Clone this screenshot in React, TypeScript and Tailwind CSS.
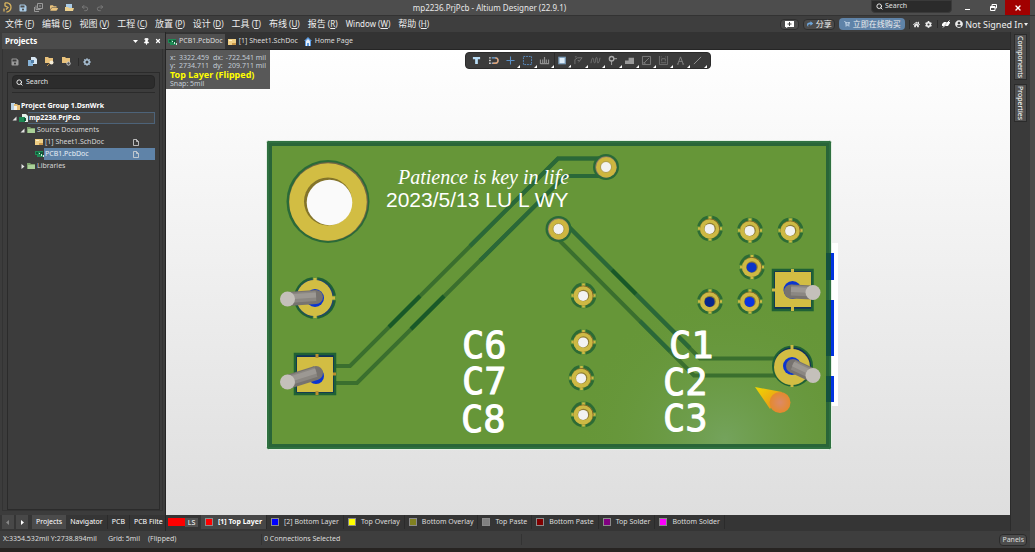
import React from 'react';
import { Undo2, Redo2, Search, Pin, X } from 'lucide-react';
import { FaHome, FaCog, FaUserCircle, FaSave, FaFolderOpen, FaShare, FaCartPlus } from 'react-icons/fa';

const menus = [
  ['文件', 'F'], ['编辑', 'E'], ['视图', 'V'], ['工程', 'C'], ['放置', 'P'], ['设计', 'D'],
  ['工具', 'T'], ['布线', 'U'], ['报告', 'R'], ['Window', 'W'], ['帮助', 'H'],
];

const layers = [
  { name: '[1] Top Layer', color: 'bg-[#ff0000]', active: true },
  { name: '[2] Bottom Layer', color: 'bg-[#0000ff]' },
  { name: 'Top Overlay', color: 'bg-[#ffff00]' },
  { name: 'Bottom Overlay', color: 'bg-[#808020]' },
  { name: 'Top Paste', color: 'bg-[#808080]' },
  { name: 'Bottom Paste', color: 'bg-[#800000]' },
  { name: 'Top Solder', color: 'bg-[#800080]' },
  { name: 'Bottom Solder', color: 'bg-[#ff00ff]' },
];

const PcbIcon = () => (
  <svg width="9" height="8" viewBox="0 0 9 8" className="shrink-0">
    <path d="M0 1h8v6H2V5H0z" fill="#1f8a55" />
    <path d="M1 2h2v2H1zM5 2h3v3H5z" fill="#0f5a38" />
    <path d="M4 3h1v1H4zM6 4h1v2H6zM8 5h1v2H8z" fill="#cfe8dc" />
  </svg>
);

const SchIcon = () => (
  <svg width="8" height="8" viewBox="0 0 8 8" className="shrink-0">
    <path d="M0 1h8v6H0z" fill="#f0cf85" />
    <path d="M4 5h4v2H4z" fill="#c9974a" />
    <path d="M1 2h3v1H1z" fill="#fff1c8" />
  </svg>
);

const FolderIcon = () => (
  <svg width="8" height="8" viewBox="0 0 8 8" className="shrink-0">
    <path d="M0 1h3l1 1h4v5H0z" fill="#7fa36f" />
    <path d="M1 3h7v4H1z" fill="#a9cf98" />
  </svg>
);

const GroupIcon = () => (
  <svg width="9" height="9" viewBox="0 0 9 9" className="shrink-0">
    <path d="M0 1h4v7H0z" fill="#b9d3e6" />
    <path d="M3 2h3l1 1h2v5H3z" fill="#e8c27a" />
    <path d="M3 4h3v4H3z" fill="#f7f1e3" />
  </svg>
);

const ProjectIcon = () => (
  <svg width="9" height="9" viewBox="0 0 9 9" className="shrink-0">
    <path d="M3 0h4l2 2v6H3z" fill="#e6efe9" />
    <path d="M0 3h6v5H0z" fill="#1f8a55" />
    <path d="M5 4h2v3H5z" fill="#0f5a38" />
  </svg>
);

const PageIcon = () => (
  <svg width="6" height="7" viewBox="0 0 6 7" className="shrink-0">
    <path d="M.5.5h3l2 2v4h-5zM3.500 .5v2h2" fill="none" stroke="#d8d8d8" strokeWidth=".8" />
  </svg>
);

const Arrow = ({ open }: { open?: boolean }) => (
  <svg width="5" height="5" viewBox="0 0 5 5" className="shrink-0">
    <path d={open ? 'M4.500 .5v4h-4z' : 'M1.500 0l3 2.500-3 2.500z'} fill="#e4e4e4" />
  </svg>
);

function TitleBar() {
  return (
    <header className="grid grid-cols-[1fr_auto_1fr] h-4 bg-[#4d4d4d] border-b border-[#333]">
      <div className="flex items-center gap-[7px] pl-[3px]">
        <svg width="9" height="11" viewBox="0 0 9 11" fill="none" stroke="#d9b45f" strokeWidth="1.300">
          <path d="M2 .8h2.500C7 1.500 8 3.200 8 5.300S6.500 9.500 3.500 10.200M2 .8v3L5 5.500 3 7.500M1 6.500v3" />
        </svg>
        <button aria-label="Save"><FaSave size={8} className="text-[#a9cbe6]" /></button>
        <button aria-label="Save all">
          <svg width="9" height="9" viewBox="0 0 9 9" fill="none" stroke="#9a9a9a">
            <path d="M3.500.5h5v5h-5zM2 2.500v4h4.500M.5 4v4.500H5M5 3h2" />
          </svg>
        </button>
        <button aria-label="Open"><FaFolderOpen size={8} className="text-[#e9c27c]" /></button>
        <button aria-label="Open project">
          <svg width="9" height="9" viewBox="0 0 9 9">
            <path d="M1 1h6v5H1z" fill="#a9cbe6" />
            <path d="M0 4h3l1 1h5L8 8H0z" fill="#ecd08f" />
          </svg>
        </button>
        <button aria-label="Undo"><Undo2 size={8} className="text-[#8a8a8a]" /></button>
        <button aria-label="Redo"><Redo2 size={8} className="text-[#8a8a8a]" /></button>
      </div>
      <h1 className="pr-14 text-[8px] leading-[15px] text-[#e8e8e8]">mp2236.PrjPcb - Altium Designer (22.9.1)</h1>
      <div className="flex justify-end">
        <label className="flex items-center gap-[2px] w-[81px] h-[13px] px-1 mr-[9px] bg-[#2b2b2b] border border-[#3a3a3a] rounded-b-sm">
          <Search size={7} strokeWidth={3} className="shrink-0" />
          <input aria-label="Search" placeholder="Search" className="min-w-0 flex-1 text-[7px] bg-transparent outline-none placeholder:text-[#e0e0e0]" />
        </label>
        <button aria-label="Minimize" className="flex justify-center items-end w-3 mr-2 pb-[5px]">
          <span className="w-[5px] h-px bg-white" />
        </button>
        <button aria-label="Restore" className="flex justify-center items-center w-6">
          <svg width="7" height="7" viewBox="0 0 7 7" fill="none" stroke="#fff"><path d="M2 2V.5h4.500V4H5M.5 2.500H5v4H.5zM.5 3.500H5" /></svg>
        </button>
        <button aria-label="Close" className="flex justify-center items-center w-[25px] bg-[#a10000] mr-[5px]">
          <X size={8} strokeWidth={4} />
        </button>
      </div>
    </header>
  );
}

function MenuBar() {
  return (
    <nav className="flex items-center justify-between h-4 bg-[#3e3e3e] text-[#eee]">
      <div className="flex gap-[8px] pl-[5px] text-[8px] leading-4">
        {menus.map(([label, key]) => (
          <button key={key} className="whitespace-nowrap">
            <span className={key === 'W' ? '' : 'text-[9px]'}>{label}</span> (<u>{key}</u>)
          </button>
        ))}
      </div>
      <div className="flex items-center pr-[2px] text-[8px] leading-none">
        <button aria-label="Comment" className="flex justify-center items-center w-[19px] h-[11px] mr-1 bg-[#4b4b4b] border border-[#2e2e2e] rounded-sm">
          <svg width="9" height="7" viewBox="0 0 9 7"><path d="M0 0h9v6H3L1 7V6H0z" fill="#fff" /><path d="M4.500 1v4M2.500 3h4" stroke="#444" /></svg>
        </button>
        <button className="flex justify-center items-center gap-[3px] w-[32px] h-[11px] mr-1 bg-[#4b4b4b] border border-[#2e2e2e] rounded-sm">
          <FaShare size={6} className="text-[#6ea6dc]" />分享
        </button>
        <button className="flex justify-center items-center gap-[3px] w-[66px] h-3 mr-1 bg-[#5f83a8] rounded-sm">
          <FaCartPlus size={6} className="text-[#b6cbe0]" />立即在线购买
        </button>
        <div className="flex items-center gap-[5px] pl-[3px] border-l border-[#2b2b2b]">
          <button aria-label="Home"><FaHome size={7} /></button>
          <button aria-label="Preferences"><FaCog size={7} /></button>
          <button aria-label="Extensions" className="pl-1 border-l border-[#2b2b2b]">
            <svg width="8" height="8" viewBox="0 0 8 8"><path d="M0 4l2-2h3L2 6H0zM8 3L6 6H3l3-4h2z" fill="#fff" /><path d="M1 7.500L7.500.5" stroke="#fff" /></svg>
          </button>
          <button className="flex items-center gap-[2px] text-[9px] whitespace-nowrap">
            <FaUserCircle size={8} />Not Signed In
            <svg width="4" height="3" viewBox="0 0 4 3" className="-ml-px"><path d="M0 0h4L2 3z" fill="#eee" /></svg>
          </button>
        </div>
      </div>
    </nav>
  );
}

function ProjectsPanel() {
  return (
    <aside className="flex flex-col w-[166px] shrink-0 bg-[#3c3c3c] border-r border-[#252525]">
      <div className="flex items-center gap-[5px] h-4 mt-px ml-[2px] pl-[3px] pr-1 bg-[#4b4b4b]">
        <h2 className="flex-1 text-[8px] font-bold text-white">Projects</h2>
        <button aria-label="Panel menu"><svg width="5" height="3" viewBox="0 0 5 3"><path d="M0 0h5L2.500 3z" fill="#fff" /></svg></button>
        <button aria-label="Pin"><Pin size={7} strokeWidth={3} fill="#fff" /></button>
        <button aria-label="Close panel"><X size={6} strokeWidth={5} /></button>
      </div>
      <div className="flex flex-col flex-1 ml-[2px] mr-[2px] mb-1 pl-1 pr-[2px] border border-t-0 border-[#333]">
        <div className="flex items-center gap-2 h-[23px] pt-[2px] pl-1">
          <button aria-label="Save"><FaSave size={8} className="text-[#9a9a9a]" /></button>
          <button aria-label="Compile" className="pl-px">
            <svg width="9" height="9" viewBox="0 0 9 9"><path d="M3 0h4l2 2v5H3z" fill="#d7e6f2" /><path d="M0 3h5v6H0z" fill="#86b3d9" /><path d="M3 3h3v3H3z" fill="#527fa8" /></svg>
          </button>
          <button aria-label="Open folder">
            <svg width="9" height="9" viewBox="0 0 9 9"><path d="M0 0h3l1 1h4v5H0z" fill="#e9c27c" /><circle cx="6.500" cy="5.500" r="2" fill="#f4ecd8" /><path d="M2 9l3-3" stroke="#b78d4a" /></svg>
          </button>
          <button aria-label="Folder options">
            <svg width="9" height="9" viewBox="0 0 9 9"><path d="M0 0h3l1 1h4v5H0z" fill="#e9c27c" /><circle cx="6.500" cy="6.500" r="1.700" fill="#555" stroke="#ccc" /></svg>
          </button>
          <button aria-label="Settings" className="-ml-px pl-1 border-l border-[#2b2b2b]">
            <svg width="8" height="8" viewBox="0 0 8 8" fill="none" stroke="#a8bfd3"><circle cx="4" cy="4" r="2.300" strokeWidth="1.600" /><path d="M4 0v8M0 4h8M1.200 1.200l5.600 5.600M6.800 1.200L1.200 6.800" strokeDasharray="1 6" /></svg>
          </button>
        </div>
        <div className="flex-1 border border-[#2b2b2b] pl-1 pr-1 pt-[2px]">
          <label className="flex items-center gap-[3px] h-[14px] px-[3px] bg-[#2c2c2c] border border-[#262626] rounded-sm">
            <Search size={7} strokeWidth={3} className="shrink-0" />
            <input aria-label="Search projects" placeholder="Search" className="min-w-0 flex-1 text-[7px] bg-transparent outline-none placeholder:text-[#e0e0e0]" />
          </label>
          <div className="mt-[3px] mb-[7px] h-px bg-[#2b2b2b]" />
          <ul className="-ml-px text-[7px] leading-3 text-[#d6d6d6]">
            <li className="flex items-center gap-px h-3 font-bold text-white"><GroupIcon />Project Group 1.DsnWrk</li>
            <li className="flex items-center h-3 pl-px font-bold text-white">
              <Arrow open /><span className="w-[2px]" /><ProjectIcon />
              <span className="flex-1 h-3 pl-px leading-[10px] border border-l-0 border-[#4d6379] bg-[#454545]">mp2236.PrjPcb</span>
            </li>
            <li className="flex items-center gap-[2px] h-3 pl-[9px]"><Arrow open /><FolderIcon />Source Documents</li>
            <li className="flex items-center gap-[2px] h-3 pl-[24px] pr-4"><SchIcon /><span className="flex-1">[1] Sheet1.SchDoc</span><PageIcon /></li>
            <li className="flex items-center h-3 pl-[24px] text-[#e8eef4]">
              <PcbIcon />
              <span className="flex items-center justify-between flex-1 h-3 pl-px pr-4 bg-[#5f83a8]">PCB1.PcbDoc<PageIcon /></span>
            </li>
            <li className="flex items-center gap-[2px] h-3 pl-[9px]"><Arrow /><FolderIcon />Libraries</li>
          </ul>
        </div>
      </div>
      <div className="flex h-4 pl-[2px] text-[7px] leading-[14px] bg-[#353535] overflow-hidden">
        <button aria-label="Previous" className="flex justify-center items-center w-3 h-[14px] mr-[2px] bg-[#484848]"><svg width="4" height="5" viewBox="0 0 4 5"><path d="M3 0v5L0 2.500z" fill="#888" /></svg></button>
        <button aria-label="Next" className="flex justify-center items-center w-3 h-[14px] mr-1 bg-[#484848]"><svg width="4" height="5" viewBox="0 0 4 5"><path d="M1 0v5l3-2.500z" fill="#fff" /></svg></button>
        <button className="h-[14px] px-1 bg-[#4b4b4b] text-white">Projects</button>
        <button className="h-[14px] px-1 border-r border-[#2b2b2b]">Navigator</button>
        <button className="h-[14px] px-1 border-r border-[#2b2b2b]">PCB</button>
        <button className="h-[14px] pl-1 whitespace-nowrap">PCB Filte</button>
      </div>
    </aside>
  );
}

const toolIcons = [
  <path d="M2 2h8v2.500H7.500V10h-3V4.500H2z" fill="#b8dcf5" />,
  <g fill="none" strokeWidth="1.500"><path d="M4 3h4a2.500 2.500 0 0 1 0 6H4" stroke="#6ea6dc" /><path d="M8 3a3 3 0 0 1 0 6H5" stroke="#e0a070" /><path d="M1 3h2M1 6h2M1 9h2" stroke="#ccc" /></g>,
  <path d="M6 1.500v9M1.500 6h9" stroke="#5b91c8" strokeWidth="1.200" />,
  <path d="M1.500 1.500h9v9h-9z" fill="none" stroke="#5b91c8" strokeDasharray="2 1" />,
  <path d="M1.500 9.500h9V5M1.500 10V5M4 9V5M6 9V2M8 9V5" fill="none" stroke="#909090" strokeWidth="1.300" />,
  <g><path d="M1.500 1.500h9v9h-9z" fill="#7ea0be" /><path d="M3 3h6v6H3z" fill="#dcebf7" /></g>,
  <path d="M2 10V5l3-2h5M2 2h2M6 8l4-5M5 6h2" stroke="#777" fill="none" />,
  <path d="M1 9c1-8 3-6 3-3s2 4 2 0 2-5 2 0 2 3 3-3" stroke="#777" fill="none" />,
  <g fill="none" stroke="#aaa"><circle cx="5" cy="4" r="2.500" strokeWidth="1.500" /><path d="M5 6v5M7 4h4" /></g>,
  <path d="M1 10V6h4V3h6v7z" fill="#9a9a9a" />,
  <path d="M1.500 1.500h9v9h-9zM3 9l6-6M3 8v1h2" fill="none" stroke="#808080" />,
  <path d="M1.500 1v9.500h9V1M3 8.500h6M4 7V4h4v3M3 2h1M8 2h1" fill="none" stroke="#707070" />,
  <path d="M2 10h2M8 10h2M3 10l3-8 3 8M4 7h4" fill="none" stroke="#858585" />,
  <path d="M2 10l8-8" stroke="#999" />,
];

function Toolbar() {
  return (
    <div className="absolute top-[2px] left-[299px] flex h-[17px] px-[3px] bg-[#3b3b3b] border border-[#2b2b2b] rounded-sm">
      {toolIcons.map((icon, i) => (
        <button key={i} aria-label={`Tool ${i + 1}`} className={`flex justify-center items-center w-[17px] ${i === 5 ? 'border-l border-[#2b2b2b]' : ''}`}>
          <svg width="17" height="15" viewBox="-2.500 -1.500 17 15">
            <g transform="translate(-.4 .6) scale(.9)">{icon}</g>
            {i > 1 && <path d="M14.500 10.500v3h-3z" fill="#fff" />}
          </svg>
        </button>
      ))}
    </div>
  );
}

// Small through-hole pad with thermal relief spokes
function Pad({ x, y, hole = '#f2f2f2' }: { x: number; y: number; hole?: string }) {
  return (
    <g transform={`translate(${x} ${y})`}>
      <circle r="11.500" fill="none" stroke="#2d6b35" strokeWidth="2.800" />
      <path d="M-13 0H13M0 -13V13" stroke="#669638" strokeWidth="4.500" />
      <path d="M-12 0H12M0 -12V12" stroke="#cdb944" strokeWidth="2.600" />
      <circle r="10" fill="#7a5f26" />
      <circle r="9.600" cx="-.4" cy=".4" fill="#cdb944" />
      <circle r="5.800" fill="#8e7c34" />
      <circle r="5" cx="-.4" cy=".4" fill={hole} />
    </g>
  );
}

function Via({ x, y }: { x: number; y: number }) {
  return (
    <g transform={`translate(${x} ${y})`}>
      <circle r="13" fill="#2a6a38" />
      <circle r="10.700" fill="#8d7968" />
      <circle r="10.200" cx=".3" cy=".3" fill="#cdb63f" />
      <circle r="5.500" fill="#f2f2f2" stroke="#a3913a" strokeWidth=".8" />
    </g>
  );
}

function PinShaft({ x1, y1, x2, y2 }: { x1: number; y1: number; x2: number; y2: number }) {
  return (
    <g>
      <line x1={x1} y1={y1} x2={x2} y2={y2} stroke="#77736f" strokeWidth="14" />
      <circle cx={x1} cy={y1} r="7" fill="#77736f" />
      <line x1={x1} y1={y1 - 1} x2={x2} y2={y2 - 1} stroke="#8b8782" strokeWidth="10" />
      <line x1={x1} y1={y1 - 2} x2={x2} y2={y2 - 2} stroke="#9c9893" strokeWidth="5" />
      <circle cx={x2} cy={y2} r="7.500" fill="#c4c0ba" />
    </g>
  );
}

function Board() {
  return (
    <svg viewBox="166 50 844 465" className="absolute inset-0 w-full h-full">
      <defs>
        <radialGradient id="shine" gradientUnits="userSpaceOnUse" cx="725" cy="440" r="150">
          <stop offset="0" stopColor="#74a35c" />
          <stop offset="1" stopColor="#669638" stopOpacity="0" />
        </radialGradient>
        <linearGradient id="cone" x1="0" y1="0" x2="1" y2="1">
          <stop offset="0" stopColor="#f0d800" />
          <stop offset="1" stopColor="#e88a20" />
        </linearGradient>
        <radialGradient id="ball">
          <stop offset="0" stopColor="#dc8a68" />
          <stop offset="1" stopColor="#e58a2c" />
        </radialGradient>
      </defs>

      {/* Connector behind the right edge */}
      <rect x="828" y="243" width="10" height="163" fill="#fff" />

      {/* Substrate */}
      <rect x="266.500" y="140.500" width="565" height="309" rx="2" fill="#2a6a38" stroke="#e5efe5" />
      <rect x="267" y="141" width="564" height="308" rx="2" fill="#2f7040" />
      <rect x="269" y="143" width="560" height="304" fill="#296538" />
      <rect x="272" y="146" width="554" height="298" fill="#669638" />
      <rect x="272" y="146" width="554" height="298" fill="url(#shine)" />
      <path d="M826 253h5v27h-5zM826 300h5v56h-5zM826 376h5v26h-5z" fill="#14513f" />
      <path d="M831 253h3v27h-3zM831 300h3v56h-3zM831 376h3v26h-3z" fill="#0033e0" />

      {/* Traces */}
      <g fill="none" stroke="#3a6f2e" strokeWidth="4">
        <path d="M335 366H350L558 158.500H600" />
        <path d="M335 383H357L565 176H600" />
        <path d="M568 226L700 358.500H780" />
        <path d="M559 240L694 375.500H780" />
      </g>
      <g fill="none" stroke="#2a6838" strokeWidth="4">
        <path d="M470 246L558 158.500H600M480 260.500L565 176H600" />
        <path d="M568 226L612 270M636 294L690 348M640 321L670 351" />
      </g>
      <path d="M389 327L420 296M411 329L444 296M612 270L636 294" stroke="#185928" strokeWidth="4" />

      {/* Mounting hole */}
      <circle cx="328" cy="201.500" r="41.500" fill="#2a6a38" />
      <circle cx="328.500" cy="201.500" r="39.500" fill="#716545" />
      <circle cx="328" cy="202" r="38.800" fill="#d2bd43" />
      <circle cx="328" cy="201.500" r="24" fill="#83742a" />
      <circle cx="329.500" cy="202.500" r="22.800" fill="#fafafa" />

      <Via x={606} y={167} />
      <Via x={558.5} y={229} />
      <Pad x={583.5} y={295.5} />
      <Pad x={583.5} y={342} />
      <Pad x={581.5} y={378} />
      <Pad x={583.5} y={414.5} />
      <Pad x={710} y={228.5} />
      <Pad x={750} y={230.5} />
      <Pad x={790.5} y={230.5} />
      <Pad x={752} y={267} hole="#0b35c8" />
      <Pad x={710} y={301.5} hole="#08268c" />
      <Pad x={750} y={301.5} hole="#0b35e0" />

      {/* Power terminals */}
      <circle cx="315" cy="298" r="20" fill="#20456a" stroke="#1f6135" strokeWidth="2" />
      <path d="M315 298h21M315 277v42" stroke="#669638" strokeWidth="4.500" />
      <path d="M315 298h20M315 278v40" stroke="#cdb944" strokeWidth="3" />
      <circle cx="314.500" cy="298" r="18" fill="#d2bd43" />
      <circle cx="315" cy="298" r="9" fill="#0b35d0" />
      <PinShaft x1={316} y1={297} x2={287.5} y2={299} />

      <path d="M295 354h40v40h-40z" fill="#10305a" stroke="#1f6135" strokeWidth="2.500" />
      <path d="M297 357h36v35h-36z" fill="#d2bd43" />
      <path d="M317 354v4M317 391v4M333 374h3" stroke="#b98f30" strokeWidth="3" />
      <circle cx="316" cy="376" r="8" fill="#0b35d0" />
      <PinShaft x1={316} y1={373} x2={287.5} y2={382} />

      <path d="M773 270h39.500v40H773z" fill="#10305a" stroke="#1f6135" strokeWidth="2.500" />
      <path d="M775 272h36v35h-36z" fill="#d2bd43" />
      <path d="M792.500 269v4M792.500 307v4M772 290h3" stroke="#cdb944" strokeWidth="3" />
      <circle cx="792.500" cy="290" r="9" fill="#0b35d0" />
      <PinShaft x1={791} y1={291.5} x2={813} y2={292.5} />

      <circle cx="792.500" cy="366" r="19.500" fill="#10305a" stroke="#1f6135" strokeWidth="2" />
      <path d="M792 345v42" stroke="#cdb944" strokeWidth="3" />
      <circle cx="792" cy="367" r="18" fill="#d2bd43" />
      <circle cx="792" cy="366" r="9" fill="#0b35d0" />
      <PinShaft x1={793} y1={366} x2={813} y2={375.5} />

      {/* View direction marker */}
      <path d="M755 387l27 5-12 17z" fill="url(#cone)" />
      <circle cx="780" cy="402.500" r="10.500" fill="url(#ball)" />

      {/* Silkscreen */}
      <g fill="#fff">
        <text x="398" y="184" fontSize="20" fontStyle="italic" fontFamily="'Liberation Serif', serif">Patience is key in life</text>
        <text x="386" y="207" fontSize="21" fontFamily="'Liberation Sans', sans-serif">2023/5/13 LU L WY</text>
        <g fontSize="37" fontFamily="'DejaVu Sans Mono', monospace" stroke="#fff" strokeLinejoin="round">
          <text x="462" y="358">C6</text>
          <text x="462" y="394">C7</text>
          <text x="461" y="432">C8</text>
          <text x="669" y="358">C1</text>
          <text x="663" y="395">C2</text>
          <text x="663" y="431">C3</text>
        </g>
      </g>
    </svg>
  );
}

function Hud() {
  return (
    <div className="absolute top-0 left-0 w-[104px] h-[39px] px-1 pt-1 bg-[#585858] text-[7px] leading-[8px] text-[#c3ccd6]">
      <div className="grid grid-cols-[9px_34px_auto_1fr_12px] whitespace-nowrap">
        <span>x:</span><span>3322.459</span><span>dx:</span><span className="text-right">-722.541</span><span className="text-right">mil</span>
        <span>y:</span><span>2734.711</span><span>dy:</span><span className="text-right">209.711</span><span className="text-right">mil</span>
      </div>
      <p className="text-[9px] leading-[10px] font-bold text-[#ffff00] whitespace-nowrap">Top Layer (Flipped)</p>
      <p className="leading-[7px]">Snap: 5mil</p>
    </div>
  );
}

function Workspace() {
  return (
    <main className="flex flex-col flex-1 min-w-0">
      <div className="flex h-[18px] pt-[2px] bg-[#333] border-b border-[#252525] text-[7px] text-[#ddd] whitespace-nowrap">
        <button className="flex items-center gap-[2px] px-[2px] bg-[#505050]"><PcbIcon />PCB1.PcbDoc</button>
        <button className="flex items-center gap-[3px] px-[3px]"><SchIcon />[1] Sheet1.SchDoc</button>
        <button className="flex items-center gap-[3px] px-[3px]">
          <svg width="8" height="9" viewBox="0 0 8 9"><path d="M4 0l4 4H7v5H1V4H0z" fill="#5d9be0" /><path d="M2 4l2-2 2 2v5H5V6H3v3H2z" fill="#e8f1fb" /></svg>
          Home Page
        </button>
      </div>
      <div className="relative flex-1 overflow-hidden bg-linear-to-b from-white to-[#dedede]">
        <Board />
        <Hud />
        <Toolbar />
      </div>
      <div className="flex h-4 bg-[#353535] text-[7px] leading-[14px] whitespace-nowrap">
        <button className="flex items-center h-[14px] mr-[3px] pl-[2px]">
          <span className="w-[17px] h-2 bg-[#ff0000]" />
          <span className="w-[13px] leading-[9px] bg-[#505050]">LS</span>
        </button>
        {layers.map(l => (
          <button key={l.name} className={`flex items-center gap-[5px] h-[14px] px-1 border-r border-[#2b2b2b] ${l.active ? 'bg-[#474747] font-bold text-white' : 'text-[#ddd]'}`}>
            <span className={`w-2 h-2 border border-[#8a8a8a] ${l.color}`} />{l.name}
          </button>
        ))}
      </div>
    </main>
  );
}

export default function App() {
  return (
    <div className="flex flex-col min-h-screen bg-[#4a4a4a] text-white font-['Noto_Sans','Noto_Sans_CJK_SC',sans-serif]">
      <TitleBar />
      <div className="flex flex-col flex-1 mr-[5px] bg-[#3e3e3e]">
        <MenuBar />
        <div className="flex flex-1">
          <ProjectsPanel />
          <Workspace />
          <div className="flex flex-col items-center gap-1 w-5 pt-[2px] bg-[#3a3a3a] border-l border-[#2b2b2b] text-[7px]">
            <button className="w-[13px] h-[46px] leading-[11px] bg-[#505050] border border-[#2b2b2b] [writing-mode:vertical-rl]">Components</button>
            <button className="w-[13px] h-[38px] leading-[11px] bg-[#505050] border border-[#2b2b2b] [writing-mode:vertical-rl]">Properties</button>
          </div>
        </div>
        <footer className="flex items-center h-[17px] pl-[3px] pr-[3px] text-[7px] text-[#ddd]">
          <span className="w-[105px]">X:3354.532mil Y:2738.894mil</span>
          <span className="w-10">Grid: 5mil</span>
          <span className="w-[113px]">(Flipped)</span>
          <span className="w-[261px] pl-[2px] border-x border-[#333]">0 Connections Selected</span>
          <button className="h-3 ml-auto px-[2px] leading-[10px] bg-[#4d4d4d] border border-[#2b2b2b] rounded-sm">Panels</button>
        </footer>
      </div>
      <div className="h-1 bg-[#272422]" />
    </div>
  );
}
